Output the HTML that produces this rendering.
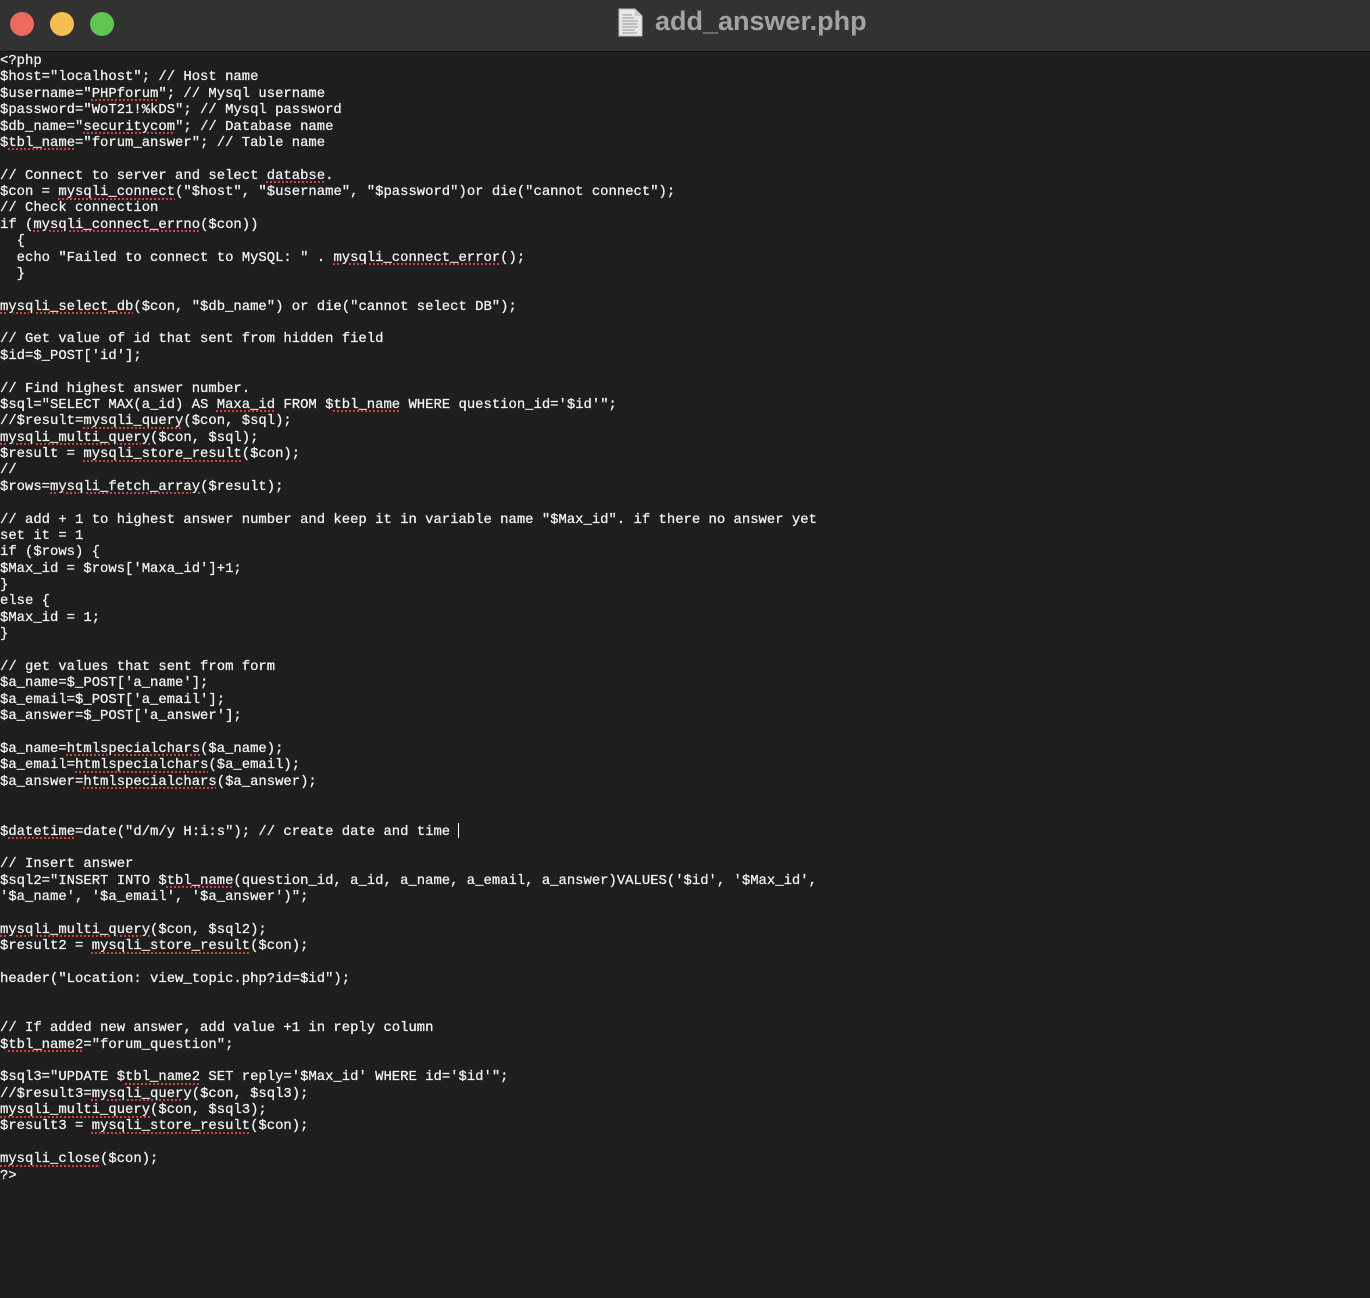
<!DOCTYPE html>
<html><head><meta charset="utf-8"><style>
html,body{margin:0;padding:0;background:#1e1e1e;width:1370px;height:1298px;overflow:hidden}
.bar{position:absolute;left:0;top:0;width:1370px;height:51px;background:#323232;border-bottom:1px solid #0e0e0e}
.dot{position:absolute;top:12px;width:24px;height:24px;border-radius:50%}
.title{position:absolute;left:655px;top:6px;font:bold 27px "Liberation Sans",sans-serif;color:#a3a3a3}
pre{position:absolute;left:0;top:53px;margin:0;font-family:"Liberation Mono",monospace;font-size:13.9px;line-height:16.37px;color:#f4f4f4;-webkit-text-stroke:0.25px #f4f4f4}
u{text-decoration:underline dotted #d04040;text-underline-offset:3px;text-decoration-thickness:1.5px}
.cur{display:inline-block;width:1px;height:15px;background:#fff;vertical-align:-3px}
</style></head><body>
<div class="bar">
<div class="dot" style="left:10px;background:#ec6a5e"></div>
<div class="dot" style="left:50px;background:#f4bf4f"></div>
<div class="dot" style="left:90px;background:#61c554"></div>
<svg style="position:absolute;left:618px;top:8px" width="25" height="29" viewBox="0 0 25 29"><path d="M1 1h16l7 7v20H1z" fill="#e8e8e8" stroke="#bbb"/><path d="M17 1v7h7" fill="#ccc"/><g stroke="#999" stroke-width="1"><path d="M4 7h10M4 10h12M4 13h16M4 16h15M4 19h16M4 22h13M4 25h15"/></g></svg>
<div class="title">add_answer.php</div>
</div>
<pre>&lt;?php
$host="localhost"; // Host name
$username="<u>PHPforum</u>"; // Mysql username
$password="WoT21!%kDS"; // Mysql password
$db_name="<u>securitycom</u>"; // Database name
$<u>tbl_name</u>="forum_answer"; // Table name

// Connect to server and select <u>databse</u>.
$con = <u>mysqli_connect</u>("$host", "$username", "$password")or die("cannot connect");
// Check connection
if (<u>mysqli_connect_errno</u>($con))
  {
  echo "Failed to connect to MySQL: " . <u>mysqli_connect_error</u>();
  }

<u>mysqli_select_db</u>($con, "$db_name") or die("cannot select DB");

// Get value of id that sent from hidden field
$id=$_POST['id'];

// Find highest answer number.
$sql="SELECT MAX(a_id) AS <u>Maxa_id</u> FROM $<u>tbl_name</u> WHERE question_id='$id'";
//$result=<u>mysqli_query</u>($con, $sql);
<u>mysqli_multi_query</u>($con, $sql);
$result = <u>mysqli_store_result</u>($con);
//
$rows=<u>mysqli_fetch_array</u>($result);

// add + 1 to highest answer number and keep it in variable name "$Max_id". if there no answer yet
set it = 1
if ($rows) {
$Max_id = $rows['Maxa_id']+1;
}
else {
$Max_id = 1;
}

// get values that sent from form
$a_name=$_POST['a_name'];
$a_email=$_POST['a_email'];
$a_answer=$_POST['a_answer'];

$a_name=<u>htmlspecialchars</u>($a_name);
$a_email=<u>htmlspecialchars</u>($a_email);
$a_answer=<u>htmlspecialchars</u>($a_answer);


$<u>datetime</u>=date("d/m/y H:i:s"); // create date and time <span class="cur"></span>

// Insert answer
$sql2="INSERT INTO $<u>tbl_name</u>(question_id, a_id, a_name, a_email, a_answer)VALUES('$id', '$Max_id',
'$a_name', '$a_email', '$a_answer')";

<u>mysqli_multi_query</u>($con, $sql2);
$result2 = <u>mysqli_store_result</u>($con);

header("Location: view_topic.php?id=$id");


// If added new answer, add value +1 in reply column
$<u>tbl_name2</u>="forum_question";

$sql3="UPDATE $<u>tbl_name2</u> SET reply='$Max_id' WHERE id='$id'";
//$result3=<u>mysqli_query</u>($con, $sql3);
<u>mysqli_multi_query</u>($con, $sql3);
$result3 = <u>mysqli_store_result</u>($con);

<u>mysqli_close</u>($con);
?&gt;</pre>
</body></html>
